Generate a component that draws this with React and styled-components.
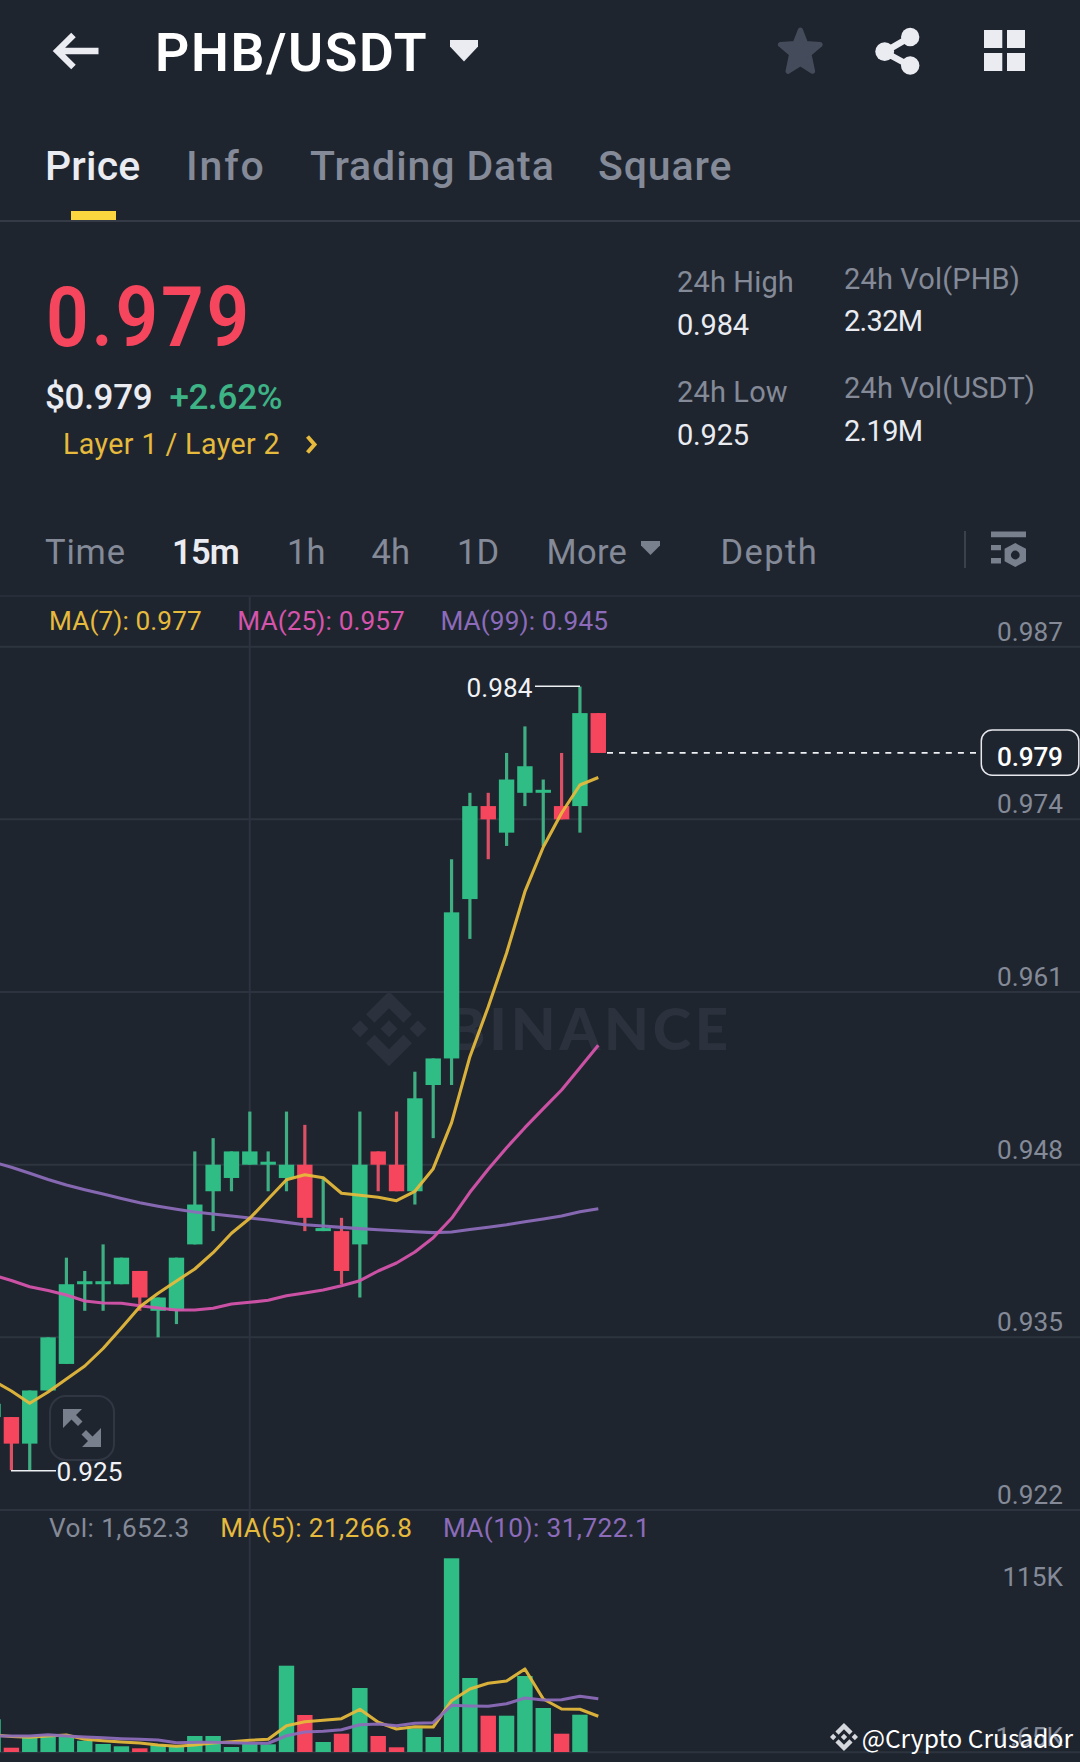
import React from "react";
import styled, { createGlobalStyle } from "styled-components";

const c = {
  bg: "#1f252f",
  line: "#2d343f",
  grid: "#2d343f",
  text: "#eaecf2",
  muted: "#848a97",
  icon: "#787f8d",
  green: "#2fbd85",
  wickGreen: "#3fae82",
  red: "#f6465d",
  wickRed: "#dc5065",
  yellow: "#e6ba3c",
  pink: "#d654ac",
  purple: "#8c6cba",
};

const Global = createGlobalStyle`
  *, *::before, *::after { box-sizing: border-box; }
  html, body { margin: 0; padding: 0; background: ${c.bg}; }
  body { font-family: Roboto, "Liberation Sans", sans-serif; color: ${c.text}; }
`;

const Screen = styled.main`
  width: 1080px;
  height: 1762px;
  overflow: hidden;
  display: flex;
  flex-direction: column;
  background: ${c.bg};
`;

const Header = styled.header`
  display: flex;
  align-items: center;
  height: 105px;
  padding: 0 55px 0 52px;
`;

const Pair = styled.h1`
  margin: 0 0 0 55px;
  font-size: 53.5px;
  line-height: 64px;
  font-weight: 600;
  letter-spacing: 1.6px;
  color: #fff;
`;

const BackButton = styled.span`
  display: flex;
  margin-bottom: 4px;
`;

const HeaderCaret = styled.span`
  display: flex;
  margin: 0 0 3px 22px;
`;

const Actions = styled.div`
  display: flex;
  align-items: center;
  margin: 0 0 4px auto;
`;

const Action = styled.span`
  display: flex;
  margin-left: ${(p) => p.$gap}px;
`;

const Tabs = styled.nav`
  display: grid;
  grid-template-columns: 141px 124px 288px auto;
  height: 117px;
  padding: 36px 0 0 45px;
  border-bottom: 2px solid #343b47;
`;

const Tab = styled.div`
  display: flex;
  flex-direction: column;
  align-items: flex-start;
  gap: 20px;
  font-size: 41px;
  line-height: 50px;
  font-weight: 500;
  letter-spacing: ${(p) => p.$ls || 0}px;
  color: ${(p) => (p.$active ? c.text : c.muted)};
`;

const TabMark = styled.span`
  width: 45px;
  height: 9px;
  margin-left: 26px;
  background: #fbd63f;
`;

const Quote = styled.section`
  display: grid;
  grid-template-columns: 631px 167px auto;
  height: 280px;
  padding-left: 46px;
`;

const Last = styled.div`
  padding-top: 51px;
`;

const BigPrice = styled.div`
  font-size: 83px;
  line-height: 90px;
  font-weight: 600;
  letter-spacing: 3.1px;
  transform: scaleX(0.9);
  transform-origin: left center;
  color: ${c.red};
`;

const Change = styled.div`
  display: flex;
  gap: 17px;
  margin: 13px 0 0 -1px;
  font-size: 35px;
  line-height: 44px;
  font-weight: 500;
  letter-spacing: -0.3px;
`;

const Percent = styled.span`
  color: #3db386;
`;

const Sector = styled.div`
  display: flex;
  align-items: center;
  gap: 26px;
  margin: 4px 0 0 17px;
  font-size: 28.6px;
  line-height: 40px;
  letter-spacing: 0.4px;
  color: ${c.yellow};
`;

const StatColumn = styled.div`
  display: flex;
  flex-direction: column;
  gap: 27px;
  padding-top: ${(p) => p.$top}px;
`;

const Stat = styled.div`
  display: flex;
  flex-direction: column;
  gap: ${(p) => p.$gap}px;
  font-size: 29px;
  line-height: 40px;
  white-space: nowrap;
`;

const StatLabel = styled.span`
  letter-spacing: 0.15px;
  color: ${c.muted};
`;

const StatValue = styled.span`
  letter-spacing: ${(p) => p.$ls || 0}px;
`;

const Intervals = styled.nav`
  display: grid;
  grid-template-columns: 127px 115px 84.5px 85.5px 89.5px 174px 1fr auto;
  align-items: center;
  height: 95px;
  padding: 7px 54px 0 45px;
  border-bottom: 2px solid #272e39;
`;

const Interval = styled.div`
  display: flex;
  align-items: center;
  gap: 14px;
  font-size: 34.5px;
  line-height: 44px;
  font-weight: ${(p) => (p.$active ? 600 : 400)};
  letter-spacing: ${(p) => p.$ls || 0}px;
  color: ${(p) => (p.$active ? c.text : c.muted)};
`;

const IntervalCaret = styled.span`
  display: flex;
  margin-bottom: 8px;
`;

const Tools = styled.div`
  display: flex;
  align-items: center;
  gap: 25px;
  margin-bottom: 6px;
`;

const Divider = styled.span`
  width: 2px;
  height: 37px;
  background: #3a414d;
`;

const ChartArea = styled.section`
  position: relative;
  height: 1165px;
`;

const ChartSvg = styled.svg`
  display: block;
`;

const Legend = styled.div`
  position: absolute;
  left: 49px;
  top: ${(p) => p.$top}px;
  display: flex;
  gap: ${(p) => p.$gap}px;
  font-size: 26.2px;
  line-height: 32px;
  letter-spacing: ${(p) => p.$ls || 0}px;
  white-space: nowrap;
`;

const LegendItem = styled.span`
  color: ${(p) => p.$color};
`;

const Expand = styled.button`
  position: absolute;
  left: 49px;
  top: 798px;
  width: 66px;
  height: 66px;
  padding: 0;
  display: flex;
  align-items: center;
  justify-content: center;
  border: 2.5px solid #303743;
  border-radius: 17px;
  background: transparent;
`;

const Author = styled.div`
  position: absolute;
  right: 7px;
  bottom: 7px;
  display: flex;
  align-items: center;
  gap: 4px;
  font-family: "Noto Sans CJK SC", "Noto Sans", sans-serif;
  font-size: 24.6px;
  line-height: 36px;
  color: #fff;
`;

const BINANCE =
  "M16.624 13.9202l2.7175 2.7154-7.353 7.353-7.353-7.352 2.7175-2.7164 4.6355 4.6595 4.6356-4.6595zm4.6366-4.6366L24 12l-2.7154 2.7164L18.5682 12l2.6924-2.7164zm-9.272.001l2.7163 2.6914-2.7164 2.7174v-.001L9.2721 12l2.7164-2.7154zm-9.2722-.001L5.4088 12l-2.6914 2.6924L0 12l2.7164-2.7164zM11.9885.0115l7.353 7.329-2.7174 2.7154-4.6356-4.6356-4.6355 4.6595-2.7174-2.7154 7.353-7.353z";

const BackIcon = () => (
  <svg width="48" height="40" viewBox="52 31 48 40" fill="none" stroke={c.text} strokeWidth="6.4">
    <path d="M98.5 51H58M73.5 35 57.3 51l16.2 16" />
  </svg>
);

const StarIcon = () => (
  <svg width="46" height="48" viewBox="777 27 46 48">
    <path
      d="M800.4 30l5.3 13.6 14.5 1-11.2 9.4 3.6 17.3-12.2-7.7-12.4 7.7 3.6-17.3-11.2-9.4 14.6-1z"
      fill="#444c5b"
      stroke="#444c5b"
      strokeWidth="5"
      strokeLinejoin="round"
    />
  </svg>
);

const ShareIcon = () => (
  <svg width="46" height="50" viewBox="874 26 46 50" fill={c.text}>
    <path d="M910.2 37 884.5 52l25.7 14" fill="none" stroke={c.text} strokeWidth="6.5" />
    <circle cx="910.2" cy="37" r="9.2" />
    <circle cx="884.7" cy="51.6" r="9.4" />
    <circle cx="910.2" cy="65.5" r="9.2" />
  </svg>
);

const GridIcon = () => (
  <svg width="41" height="41" viewBox="0 0 41 41" fill={c.text}>
    <path d="M0 0h18.3v18H0zM23 0h18.2v18H23zM0 23h18.3v18H0zM23 23h18.2v18H23z" />
  </svg>
);

const SettingsIcon = () => (
  <svg width="35" height="36" viewBox="0 0 35 36" fill={c.icon}>
    <path d="M0 .5h35v5.8H0zM0 14h10v5.3H0zM0 27h10v5.5H0z" />
    <path fillRule="evenodd" d="M24.3 12 35 17.8v12.400L24.300 36 13.600 30.200V17.800zM24.300 19.600a4.400 4.400 0 1 0 0 8.800 4.400 4.400 0 0 0 0-8.800z" />
  </svg>
);

const X0 = 11.4;
const STEP = 18.34;
const xAt = (i) => X0 + STEP * i;
const yAt = (p) => 646.7 + (987 - p) * 13.282;

// [direction, body top, body bottom, high, low] in thousandths, oldest first
const candles = [
  ["u", 930, 929, 930, 929],
  ["d", 929, 927, 929, 925],
  ["u", 931, 927, 931, 925],
  ["u", 935, 931, 935, 931],
  ["u", 939, 933, 941, 933],
  ["u", 939, 939, 940, 937],
  ["u", 939, 939, 942, 937],
  ["u", 941, 939, 941, 939],
  ["d", 940, 938, 940, 937],
  ["u", 938, 937, 938, 935],
  ["u", 941, 937, 941, 936],
  ["u", 945, 942, 949, 942],
  ["u", 948, 946, 950, 943],
  ["u", 949, 947, 949, 946],
  ["u", 949, 948, 952, 948],
  ["u", 948, 948, 949, 946],
  ["u", 948, 947, 952, 946],
  ["d", 948, 944, 951, 943],
  ["u", 943, 943, 947, 943],
  ["d", 943, 940, 944, 939],
  ["u", 948, 942, 952, 938],
  ["d", 949, 948, 949, 946],
  ["d", 948, 946, 952, 946],
  ["u", 953, 946, 955, 945],
  ["u", 956, 954, 956, 950],
  ["u", 967, 956, 971, 954],
  ["u", 975, 968, 976, 965],
  ["d", 975, 974, 976, 971],
  ["u", 977, 973, 979, 972],
  ["u", 978, 976, 981, 975],
  ["u", 976, 976, 977, 972],
  ["d", 975, 974, 979, 974],
  ["u", 982, 975, 984, 973],
  ["d", 982, 979, 982, 979],
];

const volumeHeights = [
  32.7, 4.3, 15.3, 16, 15.3, 11.3, 8, 5.7, 3.7, 7, 5.3, 16, 16, 5, 8, 7.7, 86.3, 37, 10, 18.3, 64, 16, 4.7, 23.7, 15,
  193.7, 74, 36.3, 36.3, 76, 44, 18.3, 37.3, 0,
];

// Line heights at successive candles, starting one step left of the first full candle
const ma7 = [
  1380.5, 1391, 1403.3, 1392, 1379, 1366, 1348.5, 1328, 1306.7, 1293.3, 1281, 1269, 1252.7, 1233.3, 1218.3, 1199,
  1179.7, 1174.7, 1177.7, 1193.3, 1195.3, 1197.3, 1200.7, 1191.3, 1168.7, 1122.7, 1056.7, 1007, 953, 891.7, 847, 813,
  785, 777.5,
];
const ma25 = [
  1275, 1280.5, 1286.7, 1290.5, 1295, 1301, 1303, 1303.3, 1305.7, 1308, 1310, 1310, 1308.3, 1304, 1302.3, 1300.2,
  1295.8, 1293, 1290, 1285.7, 1280.7, 1271, 1263, 1252, 1237.7, 1218.3, 1192.3, 1169.3, 1147.7, 1127.7, 1108.7, 1090,
  1067.7, 1045.3,
];
const ma99 = [
  1162, 1167.3, 1173.3, 1179.5, 1185, 1189.7, 1194, 1198.4, 1202.7, 1206.2, 1209.3, 1212, 1214, 1216, 1218, 1220,
  1222.4, 1224.7, 1226, 1227.4, 1228.6, 1229.7, 1230.8, 1231.7, 1232.6, 1232, 1229.5, 1227.3, 1224.7, 1221.7, 1219,
  1216, 1211.7, 1208.7,
];
const volMa5 = [
  1735, 1736.5, 1737.3, 1736, 1735, 1739.3, 1740.7, 1742, 1743, 1745, 1746.3, 1745, 1743, 1741.7, 1740.3, 1739.3,
  1725.7, 1721.7, 1720.3, 1718.7, 1709.3, 1722.3, 1729, 1726.7, 1727, 1700.7, 1689, 1683.3, 1681, 1669, 1699, 1709,
  1709.3, 1716.3,
];
const volMa10 = [
  1736, 1736, 1736, 1734.7, 1736, 1737, 1737.7, 1738.7, 1739.3, 1740, 1742.7, 1742.3, 1742.3, 1742.7, 1743.3, 1743.3,
  1735.7, 1732, 1731.3, 1729.7, 1724.7, 1724, 1725.7, 1723.3, 1722.7, 1705.3, 1706, 1706.3, 1703.7, 1698, 1700,
  1699.7, 1696.3, 1698.7,
];

const Line = ({ data, color }) => (
  <polyline
    points={data.map((y, i) => `${xAt(i - 1).toFixed(1)},${y}`).join(" ")}
    fill="none"
    stroke={color}
    strokeWidth="3.1"
    strokeLinejoin="round"
    opacity="0.94"
  />
);

const priceTicks = [
  ["0.987", 646.7],
  ["0.974", 819.3],
  ["0.961", 992],
  ["0.948", 1164.7],
  ["0.935", 1337.3],
  ["0.922", 1510],
];

const Chart = () => (
  <ChartSvg width="1080" height="1165" viewBox="0 597 1080 1165" fontSize="26.2">
    <g stroke={c.grid} strokeWidth="2">
      {priceTicks.map(([label, y]) => (
        <path key={label} d={`M0 ${y}H1080`} />
      ))}
      <path d="M0 1752.300H1080M249.700 597V1752" />
    </g>

    <g fill="#2b323d">
      <path d={BINANCE} transform="translate(351.600 991.300) scale(3.120)" />
      <text x="447" y="1049.500" fontFamily="Lato, sans-serif" fontWeight="900" fontSize="58" textLength="281">
        BINANCE
      </text>
    </g>

    {candles.map(([dir, top, bottom, high, low], i) => {
      const x = xAt(i - 1);
      const up = dir === "u";
      const flat = top === bottom;
      const bodyTop = flat ? yAt(top) - 3 : yAt(top);
      return (
        <g key={i}>
          <path d={`M${x} ${yAt(high)}V${yAt(low)}`} stroke={up ? c.wickGreen : c.wickRed} strokeWidth="3.2" />
          <rect x={x - 7.7} y={bodyTop} width="15.4" height={yAt(bottom) - bodyTop} fill={up ? c.green : c.red} />
          <rect
            x={x - 7.7}
            y={1752 - volumeHeights[i]}
            width="15.4"
            height={volumeHeights[i]}
            fill={up ? c.green : c.red}
          />
        </g>
      );
    })}

    <Line data={ma99} color={c.purple} />
    <Line data={ma25} color={c.pink} />
    <Line data={ma7} color={c.yellow} />
    <Line data={volMa5} color={c.yellow} />
    <Line data={volMa10} color={c.purple} />

    <path d="M607 752.800H976" stroke="#eef0f4" strokeWidth="1.800" strokeDasharray="6 6.100" />
    <path d="M535 686.200H580M11 1470.700H56" stroke="#eef0f4" strokeWidth="1.600" />
    <g fill="#f0f2f6">
      <text x="466.500" y="696.500" textLength="66">0.984</text>
      <text x="56.500" y="1480.500" textLength="66">0.925</text>
    </g>

    <g fill={c.muted} textAnchor="end">
      {priceTicks.map(([label, y]) => (
        <text key={label} x="1063" y={y - 6.200} textLength="66">{label}</text>
      ))}
      <text x="1063" y="1586">115K</text>
      <text x="1063" y="1745.500">1.65K</text>
    </g>

    <rect x="981.300" y="730" width="97.500" height="45.300" rx="11" fill={c.bg} stroke="#e6e8ee" strokeWidth="1.500" />
    <text x="1063" y="765.800" textAnchor="end" textLength="66" fill="#fff" fontWeight="500">0.979</text>
  </ChartSvg>
);

export default function App() {
  return (
    <Screen>
      <Global />
      <Header>
        <BackButton>
          <BackIcon />
        </BackButton>
        <Pair>PHB/USDT</Pair>
        <HeaderCaret>
          <svg width="28" height="22" viewBox="0 0 28 22" fill={c.text}>
            <path d="M0 0h28v6.500L14 21.500 0 6.500z" />
          </svg>
        </HeaderCaret>
        <Actions>
          <Action $gap={0}><StarIcon /></Action>
          <Action $gap={51}><ShareIcon /></Action>
          <Action $gap={64}><GridIcon /></Action>
        </Actions>
      </Header>

      <Tabs>
        <Tab $active $ls={0.2}>
          Price
          <TabMark />
        </Tab>
        <Tab $ls={1.9}>Info</Tab>
        <Tab $ls={0.9}>Trading Data</Tab>
        <Tab $ls={0.9}>Square</Tab>
      </Tabs>

      <Quote>
        <Last>
          <BigPrice>0.979</BigPrice>
          <Change>
            <span>$0.979</span>
            <Percent>+2.62%</Percent>
          </Change>
          <Sector>
            Layer 1 / Layer 2
            <svg width="12" height="19" viewBox="0 0 12 19" fill="none" stroke={c.yellow} strokeWidth="4">
              <path d="M1.500 1.500 8.500 9.500 1.500 17.500" />
            </svg>
          </Sector>
        </Last>
        <StatColumn $top={40}>
          <Stat $gap={3}>
            <StatLabel>24h High</StatLabel>
            <StatValue $ls={-0.2}>0.984</StatValue>
          </Stat>
          <Stat $gap={3}>
            <StatLabel>24h Low</StatLabel>
            <StatValue $ls={-0.2}>0.925</StatValue>
          </Stat>
        </StatColumn>
        <StatColumn $top={37}>
          <Stat $gap={2}>
            <StatLabel>24h Vol(PHB)</StatLabel>
            <StatValue $ls={-0.7}>2.32M</StatValue>
          </Stat>
          <Stat $gap={3}>
            <StatLabel>24h Vol(USDT)</StatLabel>
            <StatValue $ls={-0.7}>2.19M</StatValue>
          </Stat>
        </StatColumn>
      </Quote>

      <Intervals>
        <Interval $ls={0.8}>Time</Interval>
        <Interval $active $ls={-0.8}>15m</Interval>
        <Interval>1h</Interval>
        <Interval>4h</Interval>
        <Interval>1D</Interval>
        <Interval $ls={0.3}>
          More
          <IntervalCaret>
            <svg width="19" height="14" viewBox="0 0 19 14" fill={c.icon}>
              <path d="M0 0h19v4.500L9.500 14 0 4.500z" />
            </svg>
          </IntervalCaret>
        </Interval>
        <Interval $ls={1.4}>Depth</Interval>
        <Tools>
          <Divider />
          <SettingsIcon />
        </Tools>
      </Intervals>

      <ChartArea>
        <Chart />
        <Legend $top={8} $gap={35.5} $ls={0.1}>
          <LegendItem $color={c.yellow}>MA(7): 0.977</LegendItem>
          <LegendItem $color={c.pink}>MA(25): 0.957</LegendItem>
          <LegendItem $color={c.purple}>MA(99): 0.945</LegendItem>
        </Legend>
        <Legend $top={915} $gap={30.5} $ls={0.4}>
          <LegendItem $color={c.muted}>Vol: 1,652.3</LegendItem>
          <LegendItem $color={c.yellow}>MA(5): 21,266.8</LegendItem>
          <LegendItem $color={c.purple}>MA(10): 31,722.1</LegendItem>
        </Legend>
        <Expand aria-label="Full screen">
          <svg width="38" height="38" viewBox="0 0 38 38" fill={c.icon}>
            <path d="M0 0h19l-6 6 6.500 6.500-4.500 4.500L8.500 10.500 0 19zM38 38H19l6-6-6.500-6.500 4.500-4.500 6.500 6.500L38 19z" />
          </svg>
        </Expand>
        <Author>
          <svg width="28" height="28" viewBox="0 0 24 24" fill="#d5d8dc">
            <path d={BINANCE} />
          </svg>
          @Crypto Crusador
        </Author>
      </ChartArea>
    </Screen>
  );
}
